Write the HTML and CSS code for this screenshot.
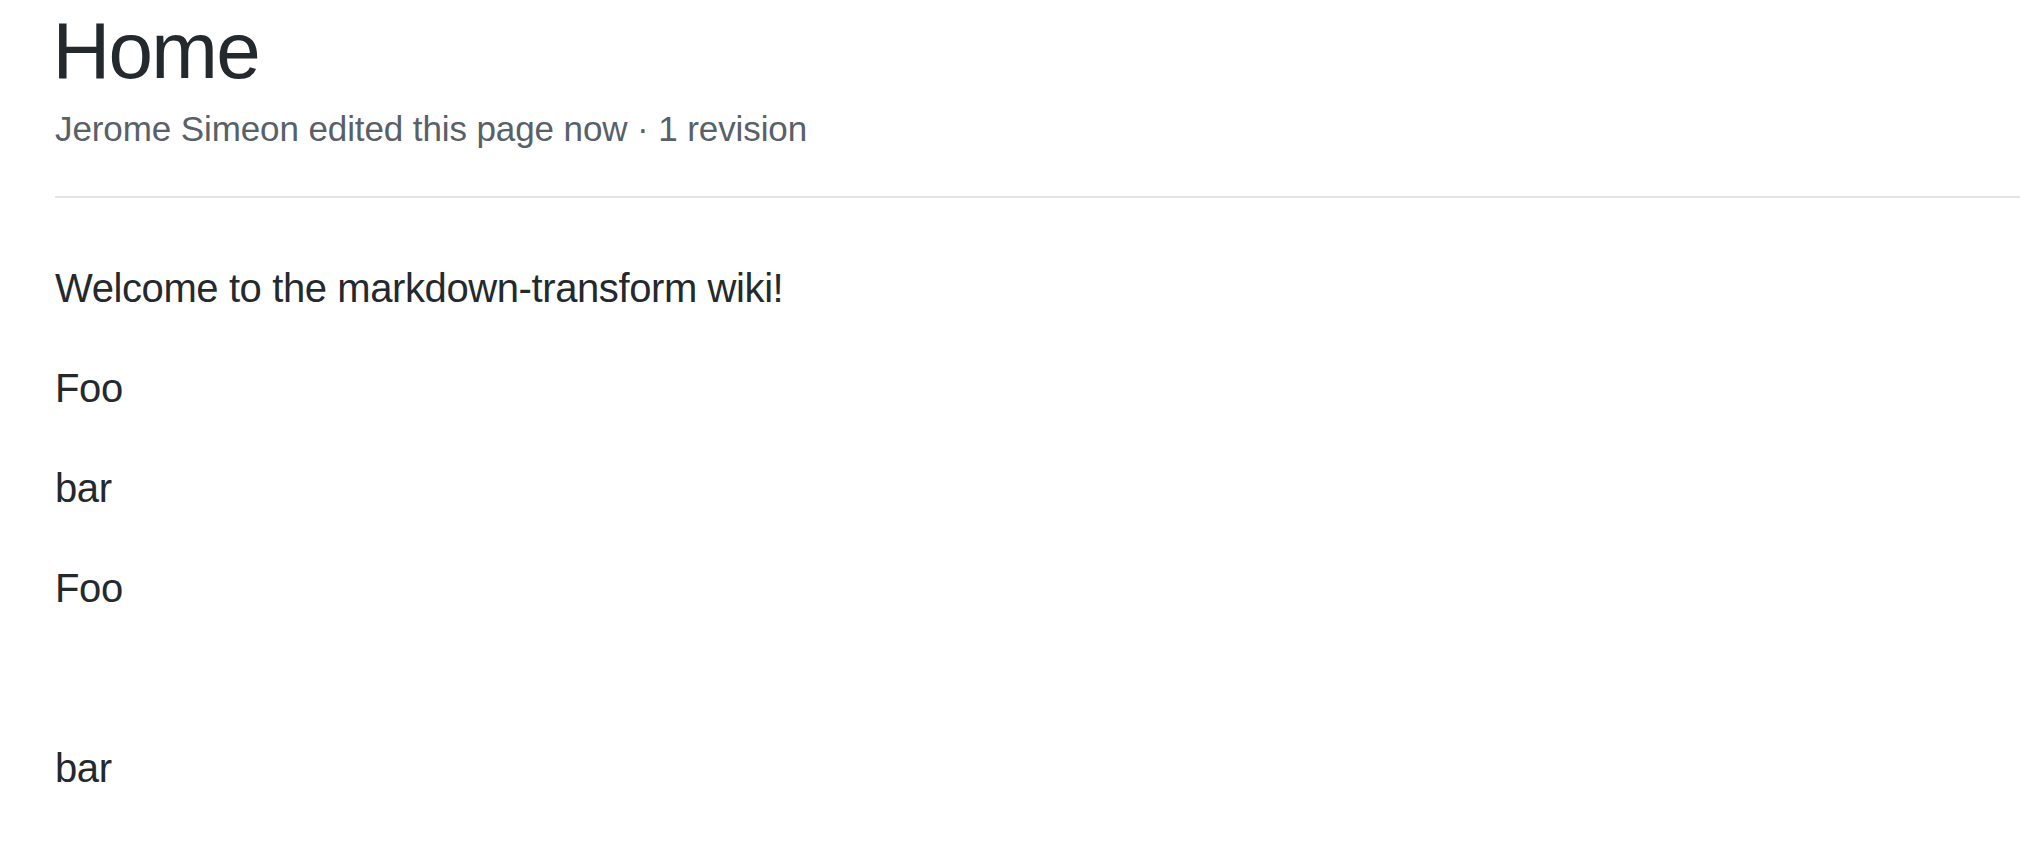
FILE: index.html
```html
<!DOCTYPE html>
<html lang="en">
<head>
<meta charset="utf-8">
<title>Home · markdown-transform Wiki</title>
<link rel="stylesheet" href="styles.css">
</head>
<body>
<div class="page">
  <header class="wiki-header">
    <h1 class="wiki-title">Home</h1>
    <div class="wiki-meta">Jerome Simeon edited this page now · 1 revision</div>
  </header>
  <div class="markdown-body">
    <p>Welcome to the markdown-transform wiki!</p>
    <p>Foo</p>
    <p>bar</p>
    <p>Foo</p>
    <div class="blank"></div>
    <p>bar</p>
  </div>
</div>
</body>
</html>
```

FILE: styles.css
```css
html, body {
  margin: 0;
  padding: 0;
  background: #ffffff;
}

body {
  font-family: "Liberation Sans", Arial, Helvetica, sans-serif;
  color: #24292e;
  overflow: hidden;
}

.page {
  padding-left: 55px;
}

.wiki-header {
  padding-bottom: 40px;
  border-bottom: 2px solid #e1e4e8;
}

.wiki-title {
  margin: 6px 0 0;
  font-size: 80px;
  line-height: 90px;
  font-weight: 400;
  letter-spacing: -1.75px;
  text-indent: -2.5px;
  color: #24292e;
}

.wiki-meta {
  margin-top: 7px;
  font-size: 35px;
  line-height: 52.5px;
  letter-spacing: -0.1px;
  color: #586069;
}

.markdown-body {
  padding-top: 60px;
  font-size: 40px;
  line-height: 60px;
  letter-spacing: -0.4px;
}

.markdown-body p {
  margin: 0 0 40px;
}

.markdown-body .blank {
  height: 80px;
}
```
